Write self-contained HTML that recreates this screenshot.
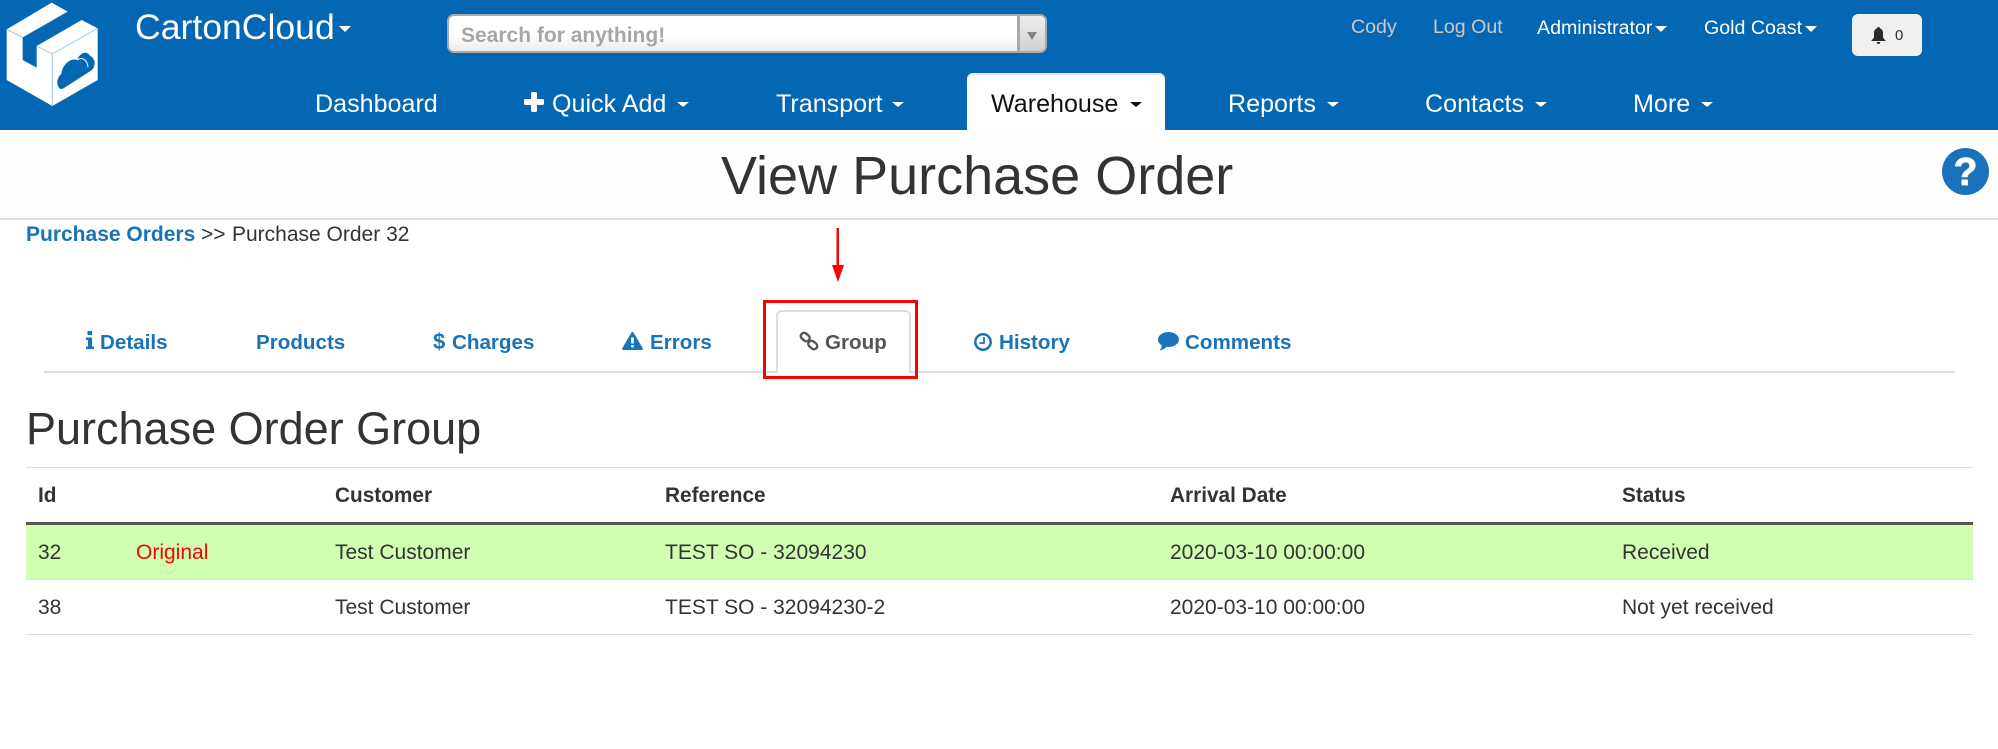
<!DOCTYPE html>
<html lang="en">
<head>
<meta charset="utf-8">
<title>View Purchase Order</title>
<style>
html,body{margin:0;padding:0;width:1998px;height:749px;overflow:hidden;background:#fff;font-family:"Liberation Sans",Arial,sans-serif;color:#333}
.t{position:absolute;white-space:nowrap;line-height:0;top:calc(var(--b) - .3465em);font-size:21px;margin:0;font-weight:400}
.a{position:absolute}
.hdr{position:absolute;left:0;top:0;width:1998px;height:130px;background:#0467b3}
.n{font-size:25.1px;color:#fff;--b:113px}
.u{font-size:19.6px;--b:35px;color:#fff}
.cw{position:absolute;width:0;height:0;border-left:6px solid transparent;border-right:6px solid transparent;border-top:6px solid #fff}
.tab{font-size:20.6px;font-weight:700;color:#1a72bb;--b:350px}
.th{font-weight:700;font-size:20.8px;--b:503px;color:#333}
.r1{--b:560px}
.r2{--b:615px}
.ln{position:absolute;background:#ddd}
</style>
</head>
<body>
<header class="hdr">
<svg class="a" style="left:0;top:0" width="120" height="130" viewBox="0 0 360 390">
<path fill="#fff" d="M20 88 155 8 203 35 68 112V180L110 203V138L245 60 293 85V240L157 318 20 240Z"/>
<path fill="none" stroke="#a9d0ee" stroke-width="3.5" d="M20 88 68 112M110 138 157 162 293 85M157 162V318"/>
<path fill="#0467b3" d="M176 262C168 250 172 232 184 222 186 198 208 172 232 180 238 158 262 150 270 168 284 172 290 195 276 210L192 264C186 268 180 268 176 262Z"/>
<path fill="none" stroke="#fff" stroke-width="3" d="M232 180C246 170 262 178 264 202"/>
</svg>
<div class="t" style="left:135px;--b:39px;font-size:35.6px;color:#fff">CartonCloud</div>
<i class="cw" style="left:339px;top:26px"></i>

<div class="a" style="left:447px;top:14px;width:600px;height:39px;box-sizing:border-box;border:2px solid #aaa;border-radius:7px;background:linear-gradient(#fff 55%,#ececec);overflow:hidden">
  <div class="a" style="right:0;top:0;bottom:0;width:25px;border-left:3px solid #aaa;background:linear-gradient(#eee,#d0d0d0)"></div>
  <div class="a" style="right:8px;top:16px;width:0;height:0;border-left:5px solid transparent;border-right:5px solid transparent;border-top:8px solid #808080"></div>
</div>
<div class="t" style="left:461px;--b:43px;font-weight:700;color:#a6a6a6;font-size:21px">Search for anything!</div>

<div class="t u" style="left:1351px;color:#c9c9c9;--b:34px">Cody</div>
<div class="t u" style="left:1433px;color:#c9c9c9;--b:34px">Log Out</div>
<div class="t u" style="left:1537px">Administrator</div>
<i class="cw" style="left:1655px;top:26px"></i>
<div class="t u" style="left:1704px">Gold Coast</div>
<i class="cw" style="left:1805px;top:26px"></i>
<div class="a" style="left:1852px;top:14px;width:70px;height:42px;border-radius:6px;background:#f0f0f0"></div>
<svg class="a" style="left:1871px;top:27px" width="15" height="17" viewBox="0 0 15 17"><path fill="#2b2b2b" d="M7.5 0C8.4 0 9 .6 9 1.4 11 2 12 3.6 12 6V9.5C12 11 13.2 12.3 14.5 13.3V14H.5V13.3C1.800 12.300 3 11 3 9.500V6C3 3.600 4 2 6 1.400 6 .6 6.600 0 7.500 0ZM5.700 15H9.300C9.200 16.200 8.500 17 7.500 17S5.800 16.200 5.700 15Z"/></svg>
<div class="t" style="left:1895px;--b:41px;font-size:15px;color:#333">0</div>

<nav>
<div class="t n" style="left:315px">Dashboard</div>
<svg class="a" style="left:524px;top:92px" width="20" height="20" viewBox="0 0 20 20"><path fill="#fff" d="M7 1.500Q7 0 8.500 0H11.500Q13 0 13 1.500V7H18.500Q20 7 20 8.500V11.500Q20 13 18.500 13H13V18.500Q13 20 11.500 20H8.500Q7 20 7 18.500V13H1.500Q0 13 0 11.500V8.500Q0 7 1.500 7H7Z"/></svg>
<div class="t n" style="left:552px">Quick Add</div>
<i class="cw" style="left:677px;top:102px;border-top-width:5px"></i>
<div class="t n" style="left:776px">Transport</div>
<i class="cw" style="left:892px;top:102px;border-top-width:5px"></i>
<div class="a" style="left:967px;top:73px;width:198px;height:57px;background:#fff;border-radius:6px 6px 0 0;box-shadow:inset 0 2px 0 #e6e6e6"></div>
<div class="t n" style="left:991px;color:#111">Warehouse</div>
<i class="cw" style="left:1130px;top:102px;border-top-width:5px;border-top-color:#111"></i>
<div class="t n" style="left:1228px">Reports</div>
<i class="cw" style="left:1327px;top:102px;border-top-width:5px"></i>
<div class="t n" style="left:1425px">Contacts</div>
<i class="cw" style="left:1535px;top:102px;border-top-width:5px"></i>
<div class="t n" style="left:1633px">More</div>
<i class="cw" style="left:1701px;top:102px;border-top-width:5px"></i>
</nav>
</header>

<div class="a" style="left:0;top:130px;width:1998px;height:88px;background:#fefefe"></div>
<div class="ln" style="left:0;top:218px;width:1998px;height:2px"></div>
<h1 class="t" style="left:721px;--b:195px;font-size:54px;color:#333">View Purchase Order</h1>
<svg class="a" style="left:1942px;top:148px" width="47" height="47" viewBox="0 0 47 47"><circle cx="23.500" cy="23.500" r="23.500" fill="#1a72bb"/><text x="23.500" y="37" text-anchor="middle" font-family="Liberation Sans" font-weight="700" font-size="39" fill="#fff" stroke="#fff" stroke-width=".8">?</text></svg>

<div class="t" style="left:26px;--b:242px;font-weight:700;color:#1a72bb;font-size:21px">Purchase Orders</div>
<div class="t" style="left:201px;--b:242px">&gt;&gt;</div>
<div class="t" style="left:232px;--b:242px">Purchase Order 32</div>

<svg class="a" style="left:825px;top:228px" width="26" height="54" viewBox="0 0 26 54"><path fill="#f00" d="M11.500 0H14V37H19L13 54 7 37H11.500Z"/></svg>

<div class="ln" style="left:44px;top:371px;width:1911px;height:2px"></div>
<div class="a" style="left:776px;top:310px;width:135px;height:63px;box-sizing:border-box;border:2px solid #ddd;border-bottom:0;border-radius:6px 6px 0 0;background:#fff"></div>

<svg class="a" style="left:85px;top:331px" width="10" height="19" viewBox="0 0 10 19"><path fill="#1a72bb" d="M2.500 0H7V4H2.500ZM1 6.500H7V15.500H9V18H1V15.500H3V9H1Z"/></svg>
<div class="t tab" style="left:100px">Details</div>
<div class="t tab" style="left:256px">Products</div>
<div class="t tab" style="left:433px;font-size:22px">$</div>
<div class="t tab" style="left:452px">Charges</div>
<svg class="a" style="left:622px;top:332px" width="21" height="18" viewBox="0 0 21 18"><path fill="#1a72bb" fill-rule="evenodd" d="M10.500 0C11 0 11.400.3 11.700.8L20.700 16.200C21.200 17.100 20.700 18 19.700 18H1.300C.3 18 -.2 17.100.3 16.200L9.300.8C9.600.3 10 0 10.500 0ZM9 5.500 9.300 11.500H11.700L12 5.500ZM9.200 13V15.500H11.800V13Z"/></svg>
<div class="t tab" style="left:650px">Errors</div>
<svg class="a" style="left:799px;top:331px" width="20" height="20" viewBox="0 0 20 20"><g fill="none" stroke="#555" stroke-width="2.400"><rect x="1.500" y="2.800" width="9.500" height="6.500" rx="3.200" transform="rotate(40 6.200 6)"/><rect x="9" y="10.800" width="9.500" height="6.500" rx="3.200" transform="rotate(40 13.800 14)"/></g></svg>
<div class="t tab" style="left:825px;color:#555">Group</div>
<svg class="a" style="left:974px;top:333px" width="18" height="18" viewBox="0 0 18 18"><circle cx="9" cy="9" r="7.700" fill="none" stroke="#1a72bb" stroke-width="2.500"/><path fill="none" stroke="#1a72bb" stroke-width="1.800" d="M10 4V10H5.500"/></svg>
<div class="t tab" style="left:999px">History</div>
<svg class="a" style="left:1158px;top:331px" width="21" height="20" viewBox="0 0 21 20"><path fill="#1a72bb" d="M10.500 1C16.300 1 21 4.400 21 8.500S16.300 16 10.500 16C9.800 16 9.200 16 8.500 15.900 7 17.500 4.500 19 1.500 19.500 3 18 3.800 16 3.800 14.300 1.500 13 0 10.900 0 8.500 0 4.400 4.700 1 10.500 1Z"/></svg>
<div class="t tab" style="left:1185px">Comments</div>

<div class="a" style="left:763px;top:300px;width:155px;height:79px;box-sizing:border-box;border:3px solid #f00"></div>

<h2 class="t" style="left:26px;--b:445px;font-size:45px;color:#333">Purchase Order Group</h2>

<div class="ln" style="left:26px;top:467px;width:1947px;height:1px"></div>
<div class="t th" style="left:38px">Id</div>
<div class="t th" style="left:335px">Customer</div>
<div class="t th" style="left:665px">Reference</div>
<div class="t th" style="left:1170px">Arrival Date</div>
<div class="t th" style="left:1622px">Status</div>
<div class="a" style="left:26px;top:522px;width:1947px;height:3px;background:#555"></div>
<div class="a" style="left:26px;top:525px;width:1947px;height:54px;background:#d0ffb3"></div>
<div class="ln" style="left:26px;top:579px;width:1947px;height:1px"></div>
<div class="t r1" style="left:38px">32</div>
<div class="t r1" style="left:136px;color:#f00">Original</div>
<div class="t r1" style="left:335px">Test Customer</div>
<div class="t r1" style="left:665px">TEST SO - 32094230</div>
<div class="t r1" style="left:1170px">2020-03-10 00:00:00</div>
<div class="t r1" style="left:1622px">Received</div>
<div class="t r2" style="left:38px">38</div>
<div class="t r2" style="left:335px">Test Customer</div>
<div class="t r2" style="left:665px">TEST SO - 32094230-2</div>
<div class="t r2" style="left:1170px">2020-03-10 00:00:00</div>
<div class="t r2" style="left:1622px">Not yet received</div>
<div class="ln" style="left:26px;top:634px;width:1947px;height:1px"></div>
</body>
</html>
